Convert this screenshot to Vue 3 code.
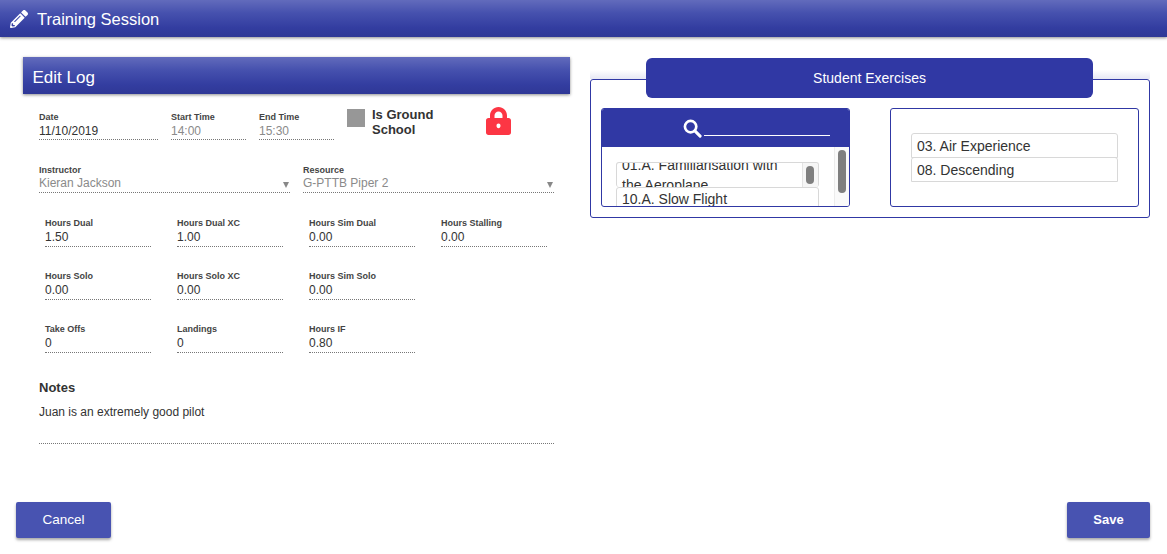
<script setup>
const timeFields = [
  { label: 'Date', value: '11/10/2019', cls: 'w-date', muted: false },
  { label: 'Start Time', value: '14:00', cls: 'w-time', muted: true },
  { label: 'End Time', value: '15:30', cls: 'w-time', muted: true },
]
const selects = [
  { label: 'Instructor', value: 'Kieran Jackson', cls: 'w-inst' },
  { label: 'Resource', value: 'G-PTTB Piper 2', cls: 'w-res' },
]
const hourRows = [
  [['Hours Dual', '1.50'], ['Hours Dual XC', '1.00'], ['Hours Sim Dual', '0.00'], ['Hours Stalling', '0.00']],
  [['Hours Solo', '0.00'], ['Hours Solo XC', '0.00'], ['Hours Sim Solo', '0.00']],
  [['Take Offs', '0'], ['Landings', '0'], ['Hours IF', '0.80']],
]
const selected = ['03. Air Experience', '08. Descending']
</script>

<template>
  <div class="page">
    <header class="topbar">
      <svg class="pencil" viewBox="0 0 512 512" width="18" height="18">
        <path fill="#fff" d="M497.9 142.1l-46.1 46.1c-4.7 4.7-12.3 4.7-17 0l-111-111c-4.7-4.7-4.7-12.3 0-17l46.1-46.1c18.7-18.7 49.1-18.7 67.9 0l60.1 60.1c18.8 18.7 18.8 49.1 0 67.9zM284.2 99.8L21.6 362.4.4 483.9c-2.9 16.4 11.4 30.6 27.8 27.8l121.5-21.3 262.6-262.6c4.7-4.7 4.7-12.3 0-17l-111-111c-4.8-4.7-12.4-4.7-17.1 0zM124.1 339.9c-5.5-5.5-5.5-14.3 0-19.8l154-154c5.5-5.5 14.3-5.5 19.8 0s5.5 14.3 0 19.8l-154 154c-5.5 5.5-14.3 5.5-19.8 0zM88 424h48v36.3l-64.5 11.3-31.1-31.1L51.7 376H88v48z"/>
      </svg>
      <span class="topbar-title">Training Session</span>
    </header>

    <main class="content">
      <section class="log">
        <h2 class="log-title">Edit Log</h2>

        <div class="row-top">
          <div v-for="f in timeFields" :key="f.label" class="field" :class="f.cls">
            <label>{{ f.label }}</label>
            <div class="val" :class="{ muted: f.muted }">{{ f.value }}</div>
          </div>
          <div class="ground">
            <span class="check"></span>
            <span class="ground-label">Is Ground School</span>
          </div>
          <svg class="lock" viewBox="0 0 25 28" width="25" height="28">
            <path fill="#fc3644" fill-rule="evenodd" d="M4 11V8.5C4 3.8 7.8 0 12.5 0S21 3.800 21 8.500V11h1.500C24 11 25 12 25 13.500V25.500C25 27 24 28 22.500 28H2.500C1 28 0 27 0 25.500V13.500C0 12 1 11 2.500 11ZM8.500 11H16.500V8.500C16.500 6.300 14.700 4.500 12.500 4.500S8.500 6.300 8.500 8.500ZM12.500 16.500C11.300 16.500 10.500 17.400 10.500 18.800C10.500 20.200 11.300 21.200 12.500 21.200S14.500 20.200 14.500 18.800C14.500 17.400 13.700 16.500 12.500 16.500Z"/>
          </svg>
        </div>

        <div class="row-select">
          <div v-for="s in selects" :key="s.label" class="field" :class="s.cls">
            <label>{{ s.label }}</label>
            <div class="val muted select">{{ s.value }}<span class="caret"></span></div>
          </div>
        </div>

        <div class="hours">
          <div v-for="(row, i) in hourRows" :key="i" class="hours-row">
            <div v-for="h in row" :key="h[0]" class="field hour">
              <label>{{ h[0] }}</label>
              <div class="val">{{ h[1] }}</div>
            </div>
          </div>
        </div>

        <div class="notes">
          <h3>Notes</h3>
          <p>Juan is an extremely good pilot</p>
        </div>
      </section>

      <section class="exercises">
        <div class="glow"></div>
        <div class="panel">
          <div class="tab">Student Exercises</div>
          <div class="box available">
            <div class="search">
              <svg viewBox="0 0 20 20" width="19" height="19">
                <circle cx="8" cy="8" r="6" fill="none" stroke="#fff" stroke-width="2.800"/>
                <path d="M12.500 12.500L18 18" stroke="#fff" stroke-width="3.200" stroke-linecap="round"/>
              </svg>
              <span class="search-line"></span>
            </div>
            <div class="list-wrap">
              <div class="list">
                <div class="item item-long">
                  <div class="long-text">01.A. Familiarisation with the Aeroplane</div>
                  <div class="mini-track"><span class="mini-thumb"></span></div>
                </div>
                <div class="item item-open">10.A. Slow Flight</div>
              </div>
              <div class="track"><span class="thumb"></span></div>
            </div>
          </div>
          <div class="box chosen">
            <div v-for="s in selected" :key="s" class="chosen-item">{{ s }}</div>
          </div>
        </div>
      </section>
    </main>

    <footer class="actions">
      <button class="btn cancel">Cancel</button>
      <button class="btn save">Save</button>
    </footer>
  </div>
</template>

<style>
html, body { margin: 0; background: #fff; }
</style>

<style scoped>
.page {
  position: relative;
  width: 1167px;
  height: 554px;
  overflow: hidden;
  font-family: "Liberation Sans", Arial, sans-serif;
  color: #333;
  display: flex;
  flex-direction: column;
}
.topbar {
  height: 37px;
  display: flex;
  align-items: center;
  padding-left: 10px;
  gap: 9px;
  color: #fff;
  background: linear-gradient(#626bbc, #4651ae 35%, #333da0 75%, #2f3896);
  box-shadow: 0 1px 3px rgba(0, 0, 0, .45);
}
.pencil { display: block; }
.topbar-title { font-size: 16.5px; line-height: 40px; }
.content {
  display: flex;
  align-items: flex-start;
  padding: 20px 17px 0 23px;
  flex: 1;
}
.log { width: 547px; }
.log-title {
  margin: 0;
  height: 37px;
  line-height: 41px;
  padding-left: 9.5px;
  font-size: 17px;
  font-weight: 400;
  color: #fff;
  background: linear-gradient(#626bbc, #4651ae 35%, #333da0 75%, #2f3896);
  box-shadow: 0 1px 3px rgba(0, 0, 0, .45);
}
.field label {
  display: block;
  font-size: 9px;
  font-weight: 700;
  line-height: 11px;
  height: 11px;
  color: #444;
}
.val {
  box-sizing: border-box;
  font-size: 12px;
  line-height: 14px;
  border-bottom: 1px dotted #777;
  color: #333;
}
.muted { color: #8a8a8a; }
.row-top {
  display: flex;
  align-items: flex-start;
  padding: 15px 0 0 16px;
  height: 50px;
  box-sizing: content-box;
}
.row-top .field { margin-top: 3px; }
.row-top .val { height: 17px; padding-top: 1px; }
.w-date { width: 119px; margin-right: 13px; }
.w-time { width: 75px; margin-right: 13px; }
.ground {
  display: flex;
  width: 139px;
}
.check {
  width: 18px;
  height: 18px;
  background: #979797;
  margin-right: 7px;
  flex: none;
}
.ground-label {
  width: 90px;
  font-size: 13px;
  font-weight: 700;
  line-height: 15px;
  margin-top: -2px;
}
.lock { display: block; margin-top: -2px; }
.row-select {
  display: flex;
  padding: 6px 0 0 16px;
  gap: 13px;
}
.w-inst { width: 251px; }
.w-res { width: 251px; }
.row-select .val { height: 17px; position: relative; }
.caret {
  position: absolute;
  right: 1.5px;
  top: 6px;
  border-left: 3.5px solid transparent;
  border-right: 3.5px solid transparent;
  border-top: 6px solid #888;
}
.hours { padding: 25px 0 0 22px; }
.hours-row {
  display: flex;
  gap: 26px;
  height: 53px;
}
.hour { width: 106px; }
.hour .val { height: 18px; padding-top: 1px; }
.notes { margin: 3px 0 0 16px; width: 515px; }
.notes h3 {
  margin: 0;
  font-size: 13px;
  line-height: 15px;
  font-weight: 700;
  color: #333;
}
.notes p {
  box-sizing: border-box;
  margin: 10px 0 0;
  font-size: 12px;
  line-height: 14px;
  height: 39px;
  border-bottom: 1px dotted #777;
  color: #333;
}
.exercises {
  position: relative;
  margin-left: 20px;
  width: 560px;
}
.glow {
  height: 9px;
  margin-top: 13px;
  background: linear-gradient(rgba(48, 56, 164, 0), rgba(48, 56, 164, .12));
}
.panel {
  position: relative;
  box-sizing: border-box;
  height: 139px;
  border: 1px solid #3038a4;
  border-radius: 3px;
  display: flex;
  padding: 28px 10px 0;
  gap: 40px;
}
.tab {
  position: absolute;
  left: 55px;
  top: -22px;
  width: 447px;
  height: 40px;
  line-height: 40px;
  text-align: center;
  background: #3038a4;
  border-radius: 6px;
  color: #fff;
  font-size: 14px;
}
.box {
  box-sizing: border-box;
  width: 249px;
  height: 99px;
  border: 1px solid #3038a4;
  border-radius: 3px;
  overflow: hidden;
  background: #fff;
}
.search {
  height: 38px;
  background: #3038a4;
  display: flex;
  align-items: center;
  padding: 0 0 0 81px;
  gap: 2px;
}
.search-line {
  width: 126px;
  height: 1px;
  background: #fff;
  margin-top: 15px;
}
.list-wrap {
  display: flex;
  height: 59px;
  overflow: hidden;
}
.list {
  flex: 1;
  padding: 15px 14px 0 14px;
  width: 232px;
  box-sizing: border-box;
}
.item {
  box-sizing: border-box;
  border: 1px solid #d8d8d8;
  border-radius: 3px;
  font-size: 14px;
  color: #333;
  background: #fff;
}
.item-long {
  width: 203px;
  height: 25px;
  display: flex;
  overflow: hidden;
  border-bottom: 0;
}
.long-text {
  width: 185px;
  height: 40px;
  padding: 0 5px;
  box-sizing: border-box;
  line-height: 20px;
  margin-top: -8px;
  flex: none;
}
.mini-track {
  flex: 1;
  border-left: 1px solid #e4e4e4;
  background: #f6f6f6;
  padding: 3px 0 0 3px;
}
.mini-thumb {
  display: block;
  width: 8px;
  height: 18px;
  border-radius: 4px;
  background: #7f7f7f;
}
.item-open {
  width: 203px;
  height: 30px;
  line-height: 22px;
  padding-left: 5px;
}
.track {
  width: 15px;
  flex: none;
  border-left: 1px solid #ececec;
  background: #fafafa;
  padding: 3px 0 0 3px;
  box-sizing: border-box;
}
.thumb {
  display: block;
  width: 8px;
  height: 43px;
  border-radius: 4px;
  background: #7f7f7f;
}
.chosen {
  padding: 24px 20px 0;
}
.chosen-item {
  box-sizing: border-box;
  height: 25px;
  line-height: 24px;
  border: 1px solid #d8d8d8;
  border-radius: 3px 3px 0 0;
  padding-left: 5px;
  font-size: 14px;
  color: #333;
  margin-bottom: -1px;
}
.actions {
  display: flex;
  justify-content: space-between;
  padding: 0 17px 16px 16px;
}
.btn {
  height: 36px;
  border: 0;
  border-radius: 2px;
  background: #4853b1;
  color: #fff;
  font-family: inherit;
  font-size: 13px;
  line-height: 36px;
  font-weight: 400;
  box-shadow: 0 2px 3px rgba(0, 0, 0, .35);
  padding: 0;
}
.cancel { width: 95px; font-size: 13.5px; }
.save { width: 83px; font-weight: 700; }
</style>
